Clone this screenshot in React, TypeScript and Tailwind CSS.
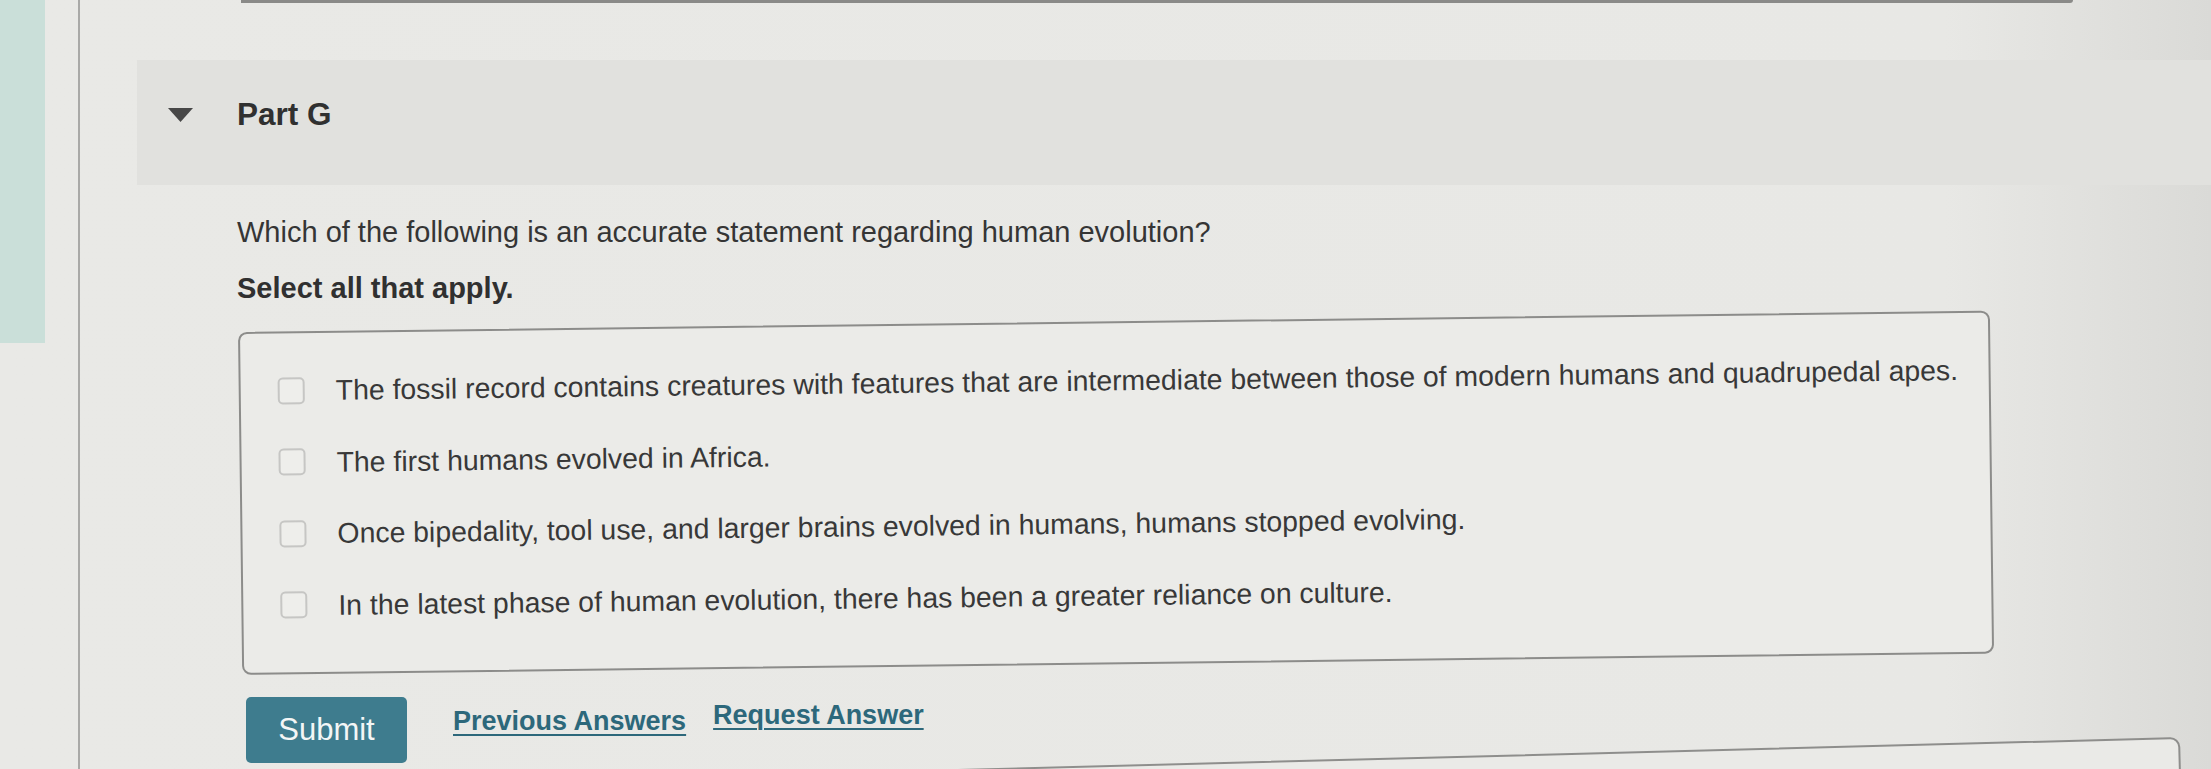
import React from "react";

const options = [
  "The fossil record contains creatures with features that are intermediate between those of modern humans and quadrupedal apes.",
  "The first humans evolved in Africa.",
  "Once bipedality, tool use, and larger brains evolved in humans, humans stopped evolving.",
  "In the latest phase of human evolution, there has been a greater reliance on culture.",
];

export default function App() {
  return (
    <div
      className="w-[2211px] h-[769px] overflow-hidden flex bg-[linear-gradient(90deg,#e9e9e6_0%,#e8e8e5_88%,#dadad7_100%)] text-[#353535]"
      style={{ fontFamily: '"Liberation Sans", Arial, Helvetica, sans-serif' }}
    >
      {/* left teal strip */}
      <div className="w-[45px] shrink-0 flex flex-col">
        <div className="h-[343px] bg-[#cadfd9]" />
      </div>
      <div className="w-[33px] shrink-0" />

      {/* main area */}
      <div className="flex-1 border-l-2 border-[#a9a9a7] flex flex-col">
        {/* bottom edge of previous box */}
        <div className="h-[60px] shrink-0">
          <div className="ml-[161px] w-[1832px] h-[3px] bg-[#8a8a88] rounded-br-[4px]" />
        </div>

        {/* Part header */}
        <div className="ml-[57px] h-[125px] shrink-0 bg-[#e1e1de] flex items-start pt-[36px] pl-[31px]">
          <svg width="25" height="14" viewBox="0 0 25 14" className="mt-[12px] shrink-0">
            <polygon points="0,0 25,0 12.5,14" fill="#474747" />
          </svg>
          <div className="ml-[44px] text-[31.5px] leading-[36px] font-bold text-[#303030]">Part G</div>
        </div>

        {/* content */}
        <div className="pl-[157px] flex flex-col">
          <div className="mt-[29px] text-[29px] leading-[36px]">
            Which of the following is an accurate statement regarding human evolution?
          </div>
          <div className="mt-[20px] text-[29px] leading-[36px] font-bold text-[#303030]">
            Select all that apply.
          </div>

          <div className="mt-[26px] ml-[1px] w-[1752px] h-[343px] border-2 border-[#8c8c8a] rounded-[9px] bg-[#ebebe8] origin-top-left -rotate-[0.7deg] pt-[37px] pl-[37px] flex flex-col gap-[31.5px]">
            {options.map((o) => (
              <div key={o} className="flex items-center h-[40px]">
                <div className="w-[27px] h-[27px] shrink-0 rounded-[5px] border-2 border-[#c6c6c4] bg-[#eeeeeb]" />
                <div className="ml-[31px] text-[28.4px] leading-[40px] whitespace-nowrap text-[#383838]">{o}</div>
              </div>
            ))}
          </div>

          <div className="mt-[22px] ml-[9px] flex items-start h-[66px]">
            <div className="w-[161px] h-[66px] rounded-[5px] bg-[#3e7c8e] flex items-center justify-center text-[31px] text-[#f3f6f6]">
              Submit
            </div>
            <div className="ml-[46px] mt-[8px] flex gap-[27px] text-[27px] leading-[32px] font-bold text-[#2d687b]">
              <span className="underline decoration-2 underline-offset-[4px]">Previous Answers</span>
              <span className="underline decoration-2 underline-offset-[4px] -mt-[6px]">Request Answer</span>
            </div>
          </div>

          <div className="-mt-[26px] ml-[3px] w-[1940px] h-[120px] shrink-0 border-2 border-[#8e8e8c] rounded-[10px] bg-[#eaeae7] origin-top-right -rotate-[1.5deg]" />
        </div>
      </div>
    </div>
  );
}
